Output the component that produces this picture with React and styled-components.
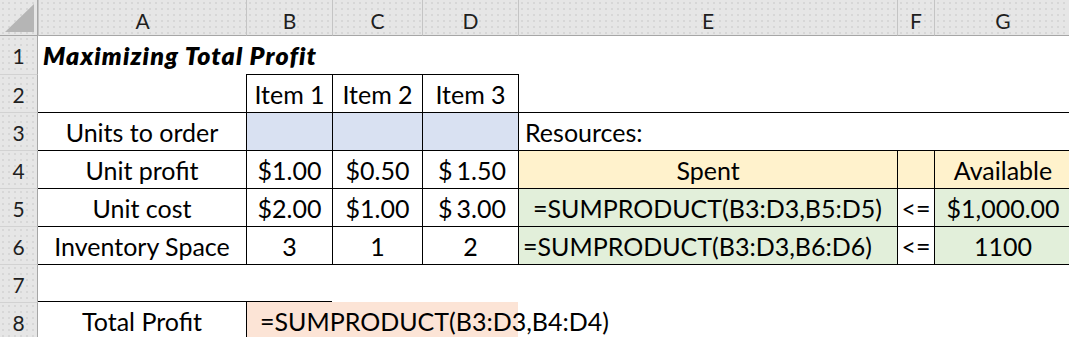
import React from "react";
import styled, { createGlobalStyle } from "styled-components";

const Global = createGlobalStyle`
  html, body { margin: 0; padding: 0; background: #fff; }
  body { width: 1069px; height: 337px; overflow: hidden; }
`;

const Sheet = styled.div`
  display: grid;
  grid-template-columns: 38px 208px 86px 90px 96px 379px 37px 137px;
  grid-template-rows: 36px repeat(8, 38px);
  width: 1071px;
  font-family: Lato, "Liberation Sans", sans-serif;
  font-size: 25px;
  color: #000;
`;

const HeadBase = styled.div`
  display: flex;
  align-items: center;
  justify-content: center;
  box-sizing: border-box;
  background-color: #e6e6e6;
  background-image: radial-gradient(circle, rgba(0, 0, 0, 0.07) 0.7px, transparent 0.9px);
  background-size: 6px 6px;
  color: #1f1f1f;
  font-size: 21px;
`;

const Corner = styled(HeadBase)`
  align-items: flex-end;
  justify-content: flex-end;
  padding: 0 3px 3px 0;
  border-bottom: 1px solid #a6a6a6;
  border-right: 1px solid #a6a6a6;
`;

const Triangle = styled.div`
  width: 29px;
  height: 28px;
  background: #b5b5b5;
  clip-path: polygon(100% 0, 100% 100%, 0 100%);
`;

const ColHead = styled(HeadBase)`
  padding-top: 5px;
  border-left: 1px solid #c4c4c4;
  border-bottom: 1px solid #a6a6a6;
`;

const RowHead = styled(HeadBase)`
  border-right: 1px solid #a6a6a6;
  border-top: ${(p) => (p.$first ? "none" : "1px solid #d2d2d2")};
  padding-top: 1px;
`;

const Cell = styled.div`
  display: flex;
  align-items: center;
  justify-content: ${(p) => p.$justify || "center"};
  box-sizing: border-box;
  min-width: 0;
  padding: 0 ${(p) => p.$padRight || 0}px 0 ${(p) => p.$pad || 0}px;
  grid-column: ${(p) => (p.$span ? `span ${p.$span}` : "auto")};
  background: ${(p) => p.$fill || "transparent"};
  border-top: ${(p) => (p.$top ? "1px solid #000" : "none")};
  border-left: ${(p) => (p.$left ? "1px solid #000" : "none")};
  border-bottom: ${(p) => (p.$bottom ? "1px solid #000" : "none")};
  white-space: nowrap;
  font-weight: ${(p) => (p.$bold ? 800 : 400)};
  font-style: ${(p) => (p.$italic ? "italic" : "normal")};
  letter-spacing: ${(p) => (p.$bold ? "1.1px" : "normal")};
`;

const BLUE = "#d9e1f2";
const YELLOW = "#fff2cc";
const GREEN = "#e2efda";
const PEACH = "#fce4d6";

const letters = ["A", "B", "C", "D", "E", "F", "G"];

// each row: list of cells after the row header
const rows = [
  [{ text: "Maximizing Total Profit", $justify: "flex-start", $pad: 5, $bold: true, $italic: true }, {}, {}, {}, {}, {}, {}],
  [
    {},
    { text: "Item 1", $top: true, $left: true },
    { text: "Item 2", $top: true, $left: true },
    { text: "Item 3", $top: true, $left: true },
    { $left: true },
    {},
    {},
  ],
  [
    { text: "Units to order", $top: true },
    { $top: true, $left: true, $fill: BLUE },
    { $top: true, $left: true, $fill: BLUE },
    { $top: true, $left: true, $fill: BLUE },
    { text: "Resources:", $top: true, $left: true, $justify: "flex-start", $pad: 6 },
    { $top: true },
    { $top: true },
  ],
  [
    { text: "Unit profit", $top: true },
    { text: "$1.00", $top: true, $left: true },
    { text: "$0.50", $top: true, $left: true },
    { money: "1.50", $top: true, $left: true },
    { text: "Spent", $top: true, $left: true, $fill: YELLOW },
    { $top: true, $left: true, $fill: YELLOW },
    { text: "Available", $top: true, $left: true, $fill: YELLOW },
  ],
  [
    { text: "Unit cost", $top: true },
    { text: "$2.00", $top: true, $left: true },
    { text: "$1.00", $top: true, $left: true },
    { money: "3.00", $top: true, $left: true },
    { text: "=SUMPRODUCT(B3:D3,B5:D5)", $top: true, $left: true, $fill: GREEN, $justify: "flex-start", $pad: 14 },
    { text: "<=", $top: true, $left: true },
    { text: "$1,000.00", $top: true, $left: true, $fill: GREEN },
  ],
  [
    { text: "Inventory Space", $top: true },
    { text: "3", $top: true, $left: true },
    { text: "1", $top: true, $left: true },
    { text: "2", $top: true, $left: true },
    { text: "=SUMPRODUCT(B3:D3,B6:D6)", $top: true, $left: true, $fill: GREEN, $justify: "flex-start", $pad: 4 },
    { text: "<=", $top: true, $left: true },
    { text: "1100", $top: true, $left: true, $fill: GREEN },
  ],
  [
    { $top: true, $bottom: true },
    { $top: true, $bottom: true },
    { $top: true },
    { $top: true },
    { $top: true },
    { $top: true },
    { $top: true },
  ],
  [
    { text: "Total Profit" },
    { text: "=SUMPRODUCT(B3:D3,B4:D4)", $span: 3, $left: true, $fill: PEACH, $justify: "flex-start", $pad: 13 },
    {},
    {},
    {},
  ],
];

export default function App() {
  return (
    <>
      <Global />
      <Sheet>
        <Corner>
          <Triangle />
        </Corner>
        {letters.map((l) => (
          <ColHead key={l}>{l}</ColHead>
        ))}
        {rows.map((cells, r) => (
          <React.Fragment key={r}>
            <RowHead $first={r === 0}>{r + 1}</RowHead>
            {cells.map(({ text, money, ...props }, c) =>
              money ? (
                <Cell key={c} {...props} $justify="space-between" $pad={15} $padRight={12}>
                  <span>$</span>
                  <span>{money}</span>
                </Cell>
              ) : (
                <Cell key={c} {...props}>
                  {text}
                </Cell>
              )
            )}
          </React.Fragment>
        ))}
      </Sheet>
    </>
  );
}
